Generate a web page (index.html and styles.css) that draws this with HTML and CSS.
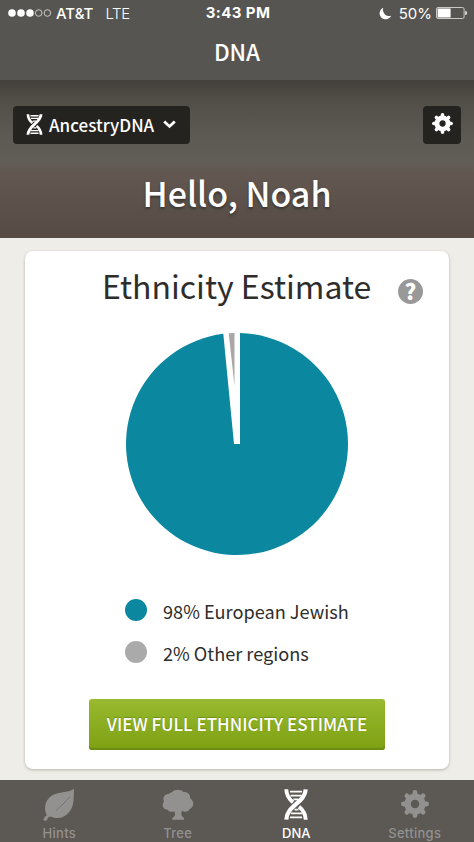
FILE: index.html
```html
<!DOCTYPE html>
<html lang="en">
<head>
    <meta charset="UTF-8">
    <meta name="viewport" content="width=device-width, initial-scale=1.0">
    <title>DNA | Ethnicity Estimate</title>
    <link rel="stylesheet" href="styles.css">
</head>
<body>

    <!-- shared icons -->
    <svg class="icon-defs" width="0" height="0" aria-hidden="true">
        <symbol id="icon-dna" viewBox="0 0 24 31">
            <g fill="none" stroke="currentColor">
                <path d="M2.3 0.3C2.5 7 5.5 10.5 9 13.2M15 17.8C18.5 20.5 21.5 24 21.7 30.7" stroke-width="3.9"/>
                <path d="M21.7 0.3C21 14 3 16 2.3 30.7" stroke-width="4.2"/>
                <path d="M6 2.6h12M6.5 6.6h11M9.5 10.4h5M10.5 20.6h4M7 24.4h11M6 28.4h12" stroke-width="1.9"/>
            </g>
        </symbol>
        <symbol id="icon-gear" viewBox="0 0 28 28">
            <path fill="none" stroke="currentColor" stroke-width="6.4" d="M14 6.6a7.4 7.4 0 1 0 0 14.8a7.4 7.4 0 1 0 0-14.8z"/>
            <g stroke="currentColor" stroke-width="4.8" stroke-linecap="round">
                <path d="M14 2.4v2.5M14 23.1v2.5M2.4 14h2.5M23.1 14h2.5M5.9 5.9l1.5 1.5M20.6 20.6l1.5 1.5M22.1 5.9l-1.5 1.5M5.9 22.1l1.5-1.5"/>
            </g>
        </symbol>
    </svg>

    <div class="status-bar">
        <div class="carrier">
            <svg class="signal" width="44" height="10" viewBox="0 0 44 10">
                <g fill="#fff">
                    <circle cx="4" cy="5" r="3.8"/>
                    <circle cx="13" cy="5" r="3.8"/>
                    <circle cx="22" cy="5" r="3.8"/>
                </g>
                <g fill="none" stroke="#d5d4d2" stroke-width="0.9">
                    <circle cx="30.7" cy="5" r="3.3"/>
                    <circle cx="39.4" cy="5" r="3.3"/>
                </g>
            </svg>
            <span class="carrier-name">AT&amp;T</span>
            <span class="network">LTE</span>
        </div>
        <div class="time">3:43 PM</div>
        <div class="battery">
            <svg width="13" height="13" viewBox="0 0 13 13">
                <path fill="#fff" d="M4.3 0.8A6 6 0 1 0 12.1 8.7A6.2 6.2 0 0 1 4.3 0.8z"/>
            </svg>
            <span class="percent">50%</span>
            <svg width="32" height="12" viewBox="0 0 32 12">
                <rect x="0.5" y="0.5" width="27.6" height="11" rx="1.5" fill="none" stroke="#c9c8c6"/>
                <rect x="1.6" y="1.5" width="13" height="9" fill="#fff"/>
                <path fill="#dddcda" d="M29.2 3.8q2 .4 2 2.2t-2 2.2z"/>
            </svg>
        </div>
    </div>

    <nav class="title-bar">
        <h1>DNA</h1>
    </nav>

    <header>
        <div class="header-buttons">
            <button class="product-button">
                <svg class="product-icon"><use href="#icon-dna"/></svg>
                <span>AncestryDNA</span>
                <svg class="chevron" width="13" height="9" viewBox="0 0 13 9">
                    <path d="M1.2 1.4l5.3 5l5.3-5" fill="none" stroke="#fff" stroke-width="2.8"/>
                </svg>
            </button>
            <button class="settings-button">
                <svg class="settings-icon"><use href="#icon-gear"/></svg>
            </button>
        </div>
        <h2>Hello, Noah</h2>
    </header>

    <main>
        <section class="card">
            <div class="card-title">
                <h3>Ethnicity Estimate</h3>
                <span class="help">?</span>
            </div>

            <svg class="pie" width="222" height="222" viewBox="0 0 222 222">
                <path fill="#0b87a0" d="M114 0.04A111 111 0 1 1 97.3 0.85L108 111H114z"/>
                <path fill="#aaa8a6" d="M102.7 0.3Q106 0 108.5 0V53z"/>
            </svg>

            <ul class="legend">
                <li><span class="dot jewish"></span><span class="region">98% European Jewish</span></li>
                <li><span class="dot other"></span><span class="region">2% Other regions</span></li>
            </ul>

            <button class="estimate-button">VIEW FULL ETHNICITY ESTIMATE</button>
        </section>
    </main>

    <footer class="tab-bar">
        <a href="#" class="tab">
            <svg width="32" height="33" viewBox="0 0 32 33">
                <path fill="currentColor" d="M31 0.8C30.6 10 31.4 17.5 26.5 23.8C21.7 30 14 31.7 8 28.6L5.2 29.2L3.8 32.2Q2 33.5 0.4 31.5Q0.2 29.5 3.8 27.2C0 20.5 2.3 10.5 10.5 6.7C17.5 3.8 26 4.8 31 0.8z"/>
                <path d="M13 22.3C18 18.5 22 14 27 8.7" fill="none" stroke="#77747a" stroke-width="1"/>
            </svg>
            <span>Hints</span>
        </a>
        <a href="#" class="tab">
            <svg width="32" height="33" viewBox="0 0 32 33">
                <path fill="currentColor" d="M10 4.2C13 .9 19.3 1.1 21.4 4C25.5 3.6 28.7 6.5 28.2 10.6C33 13.5 31.8 20 27.5 21.2C26.5 23.8 23 24.6 20.2 22.7C18.7 25.5 19 28.3 22 30V31.8H10.2V30C13.6 28.3 13.6 25.8 12.2 23.2C9.3 24.5 6.5 23.8 5.7 21.8C.8 21.5-.8 16.7 2 13.8C.2 9.5 3 5.8 6.7 6C7.6 5 8.4 4.5 10 4.2z"/>
            </svg>
            <span>Tree</span>
        </a>
        <a href="#" class="tab active">
            <svg class="tab-dna"><use href="#icon-dna"/></svg>
            <span>DNA</span>
        </a>
        <a href="#" class="tab">
            <svg class="tab-gear"><use href="#icon-gear"/></svg>
            <span>Settings</span>
        </a>
    </footer>

</body>
</html>
```
FILE: styles.css
```css
* {
    margin: 0;
    padding: 0;
    box-sizing: border-box;
}

body {
    width: 474px;
    height: 842px;
    overflow: hidden;
    display: flex;
    flex-direction: column;
    font-family: 'Noto Sans CJK JP', 'Noto Sans', sans-serif;
    background-color: #efede8;
    color: #fff;
}

button {
    border: none;
    color: #fff;
    font-family: inherit;
    cursor: pointer;
}

.icon-defs {
    display: none;
}


.status-bar {
    height: 27px;
    background-color: #565551;
    display: grid;
    grid-template-columns: 1fr auto 1fr;
    align-items: center;
    padding: 0 6px 0 8px;
    font-family: Inter, sans-serif;
    font-size: 15px;
    line-height: 25px;
}

.status-bar > div {
    height: 26px;
    align-self: start;
}

.carrier {
    display: flex;
    align-items: center;
}

.carrier-name {
    margin-left: 4px;
    font-weight: 500;
}

.network {
    margin-left: 12px;
    font-weight: 300;
    letter-spacing: -0.4px;
}

.time {
    font-weight: 700;
    letter-spacing: 0.4px;
}

.battery {
    display: flex;
    align-items: center;
    justify-content: flex-end;
}

.percent {
    margin: 0 4px 0 7px;
}


.title-bar {
    height: 53px;
    background-color: #565551;
    text-align: center;
}

.title-bar h1 {
    font-size: 22.5px;
    font-weight: 500;
    line-height: 48px;
}


header {
    height: 158px;
    padding: 26px 13px 0;
    background: linear-gradient(#43403b, #514e48 12%, #5e5b55 38%, #615d57 52%, #625851 58%, #554b44);
    text-align: center;
}

.header-buttons {
    display: flex;
    justify-content: space-between;
}

.product-button,
.settings-button {
    height: 38px;
    background-color: #24231f;
    border-radius: 4px;
    display: flex;
    align-items: center;
}

.product-button {
    width: 177px;
    padding-left: 13px;
    font-size: 17px;
    font-weight: 500;
    line-height: 38px;
}

.product-icon {
    width: 17px;
    height: 21px;
    margin-right: 6px;
    margin-bottom: 2px;
}

.chevron {
    margin-left: 9px;
    margin-bottom: 1px;
}

.settings-button {
    width: 38px;
    justify-content: center;
}

.settings-icon {
    width: 21px;
    height: 21px;
    margin-bottom: 4px;
}

header h2 {
    margin-top: 24px;
    font-size: 34px;
    font-weight: 500;
    line-height: 50px;
    text-shadow: 0 2px 3px rgba(0, 0, 0, 0.4);
}


main {
    height: 542px;
    padding: 13px 25px 11px;
}

.card {
    height: 518px;
    background-color: #fff;
    border-radius: 8px;
    box-shadow: 0 1px 3px rgba(80, 70, 60, 0.35);
    display: flex;
    flex-direction: column;
    align-items: center;
    color: #2e2d2c;
}

.card-title {
    width: 100%;
    height: 82px;
    padding: 10px 26px 0 77px;
    display: flex;
    justify-content: space-between;
}

.card-title h3 {
    font-size: 32px;
    font-weight: 400;
    line-height: 48px;
    white-space: nowrap;
}

.help {
    width: 25px;
    height: 25px;
    margin-top: 18px;
    background-color: #999;
    border-radius: 50%;
    color: #fff;
    font-size: 22px;
    font-weight: 900;
    line-height: 23px;
    text-align: center;
}

.pie {
    overflow: visible;
}

.legend {
    width: 100%;
    margin-top: 34px;
    padding-left: 100px;
    list-style: none;
}

.legend li {
    height: 42px;
    display: flex;
    align-items: center;
}

.dot {
    width: 22px;
    height: 22px;
    margin-right: 16px;
    border-radius: 50%;
}

.jewish {
    background-color: #0b87a0;
}

.other {
    background-color: #aaa;
}

.region {
    font-size: 18.15px;
    line-height: 42px;
    padding-top: 2px;
}

.estimate-button {
    width: 296px;
    height: 51px;
    margin-top: 26px;
    padding-bottom: 2px;
    background: linear-gradient(#99ba30, #7ea012);
    border-radius: 3px;
    box-shadow: inset 0 -2px 1px #6d8b14;
    font-size: 17.05px;
    font-weight: 500;
    line-height: 48px;
    white-space: nowrap;
    text-shadow: 0 -1px 1px rgba(70, 90, 0, 0.4);
}


.tab-bar {
    height: 62px;
    background-color: #5c5853;
    display: grid;
    grid-template-columns: repeat(4, 1fr);
    font-family: Inter, sans-serif;
}

.tab {
    padding-top: 8px;
    display: flex;
    flex-direction: column;
    align-items: center;
    color: #929190;
    text-decoration: none;
    font-size: 13px;
    font-weight: 500;
    line-height: 16px;
    letter-spacing: 0.3px;
}

.tab span {
    margin-top: 4px;
}

.tab-dna {
    width: 24px;
    height: 31px;
    margin: 1px 0;
}

.tab-gear {
    width: 28px;
    height: 28px;
    margin: 2px 0 3px;
}

.active {
    color: #fff;
    letter-spacing: 0;
}
```
